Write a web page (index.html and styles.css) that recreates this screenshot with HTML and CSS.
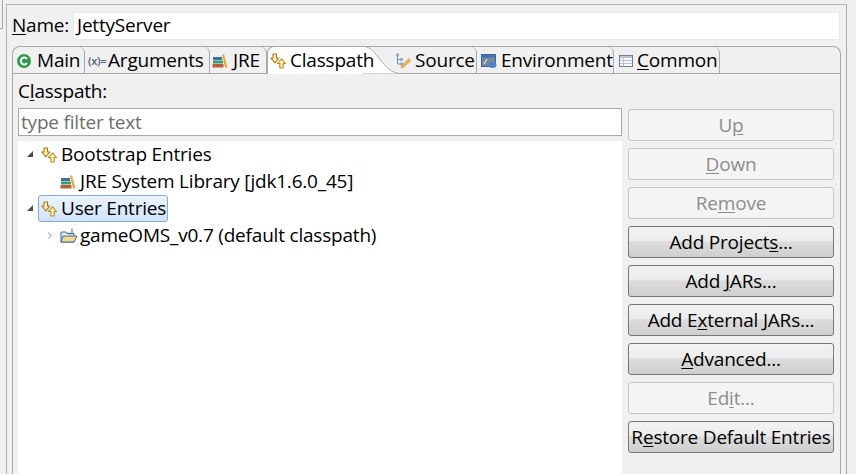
FILE: index.html
```html
<!DOCTYPE html>
<html lang="en">
<head>
<meta charset="utf-8">
<title>JettyServer</title>
<link rel="stylesheet" href="styles.css">
</head>
<body>
<svg class="defs" width="0" height="0" aria-hidden="true">
  <symbol id="i-cp" viewBox="0 0 16 16">
    <path d="M3 1h3.500v4h2.300L4.800 9.800.8 5H3z" fill="#fdf0b8" stroke="#a87a1e" stroke-width="1.100" stroke-linejoin="round"/>
    <path d="M9.800 15V10.500H7.300L11.500 5.800 15.500 10.500h-2.300V15z" fill="#fdf0b8" stroke="#c08c22" stroke-width="1.100" stroke-linejoin="round"/>
  </symbol>
  <symbol id="i-jre" viewBox="0 0 16 16">
    <rect x="1" y="4" width="9" height="3" fill="#3d6f99"/>
    <rect x="1" y="7.500" width="10" height="3" fill="#3e9a78"/>
    <rect x="0.500" y="11" width="11" height="3.500" fill="#b5603a"/>
    <path d="M10 2l2-1 3.500 13.500h-2.500z" fill="#e8a83a"/>
  </symbol>
  <symbol id="i-folder" viewBox="0 0 18 16">
    <path d="M1 4h5l1 1.500h7v8.500H1z" fill="#e8eef6" stroke="#3b6a9c"/>
    <path d="M3 8h14l-3 6H1z" fill="#f3d98b" stroke="#3b6a9c"/>
    <path d="M12 0.500v4a1.500 1.500 0 0 1-3 0" fill="none" stroke="#3b6a9c"/>
  </symbol>
</svg>

<div class="shell">
  <div class="gutter"></div>
  <main class="panel">
    <div class="name-row">
      <label class="name-label txt"><u>N</u>ame:</label>
      <div class="field name-field">JettyServer</div>
    </div>

    <section class="tabfolder">
      <div class="tabs">
        <div class="tab t-main">
          <svg class="ico" viewBox="0 0 16 16"><circle cx="8" cy="8" r="7" fill="#2f9b4a"/><path d="M11 5.800a3.500 3.500 0 1 0 0 4.400" fill="none" stroke="#fff" stroke-width="2"/></svg>
          <span class="txt">Main</span>
        </div>
        <div class="tab t-args"><span class="vars">(x)=</span><span class="txt">Arguments</span></div>
        <div class="tab t-jre"><svg class="ico"><use href="#i-jre"/></svg><span class="txt">JRE</span></div>
        <div class="tab active t-cp">
          <svg class="ico"><use href="#i-cp"/></svg><span class="over txt">Classpath</span>
          <svg class="curve" viewBox="0 0 38 28" preserveAspectRatio="none"><path d="M0 0.500H1C14 1 20 27 37 27.500H0z" fill="#fff"/><path d="M0 0.500H1C14 1 20 27 37 27.500" fill="none" stroke="#a9a9a9"/></svg>
        </div>
        <div class="tab t-src">
          <svg class="ico" viewBox="0 0 16 16"><path d="M2.500 2v9h3M2.500 6.500h3" fill="none" stroke="#6f8fb5"/><rect x="1" y="0.500" width="3" height="3" fill="#8fb0d6"/><rect x="5" y="5" width="3" height="3" fill="#8fb0d6"/><rect x="5" y="9.500" width="3" height="3" fill="#8fb0d6"/><path d="M6 15l1-3 7-6.500 2 2-7 6.500z" fill="#e9b55c" stroke="#c9913c" stroke-width=".6"/></svg>
          <span class="txt">Source</span>
        </div>
        <div class="tab t-env">
          <svg class="ico" viewBox="0 0 16 16"><rect x="0.500" y="1.500" width="14" height="12" fill="#7688a0" stroke="#3f6590"/><rect x="1" y="2" width="13" height="2.500" fill="#3f74b0"/><path d="M3 11l3-5" stroke="#fff"/><ellipse cx="11.500" cy="12" rx="4" ry="3" fill="#4a86c5"/></svg>
          <span class="txt">Environment</span>
        </div>
        <div class="tab t-common">
          <svg class="ico" viewBox="0 0 16 16"><rect x="1.500" y="2.500" width="13" height="11" fill="#f6f8fb" stroke="#6d7f95"/><rect x="2" y="3" width="12" height="2" fill="#b9c7d8"/><path d="M5.500 5v8M2 7.500h12M2 10.500h12" stroke="#b6c2d0"/></svg>
          <span class="txt"><u>C</u>ommon</span>
        </div>
      </div>

      <div class="body">
        <label class="cp-label">C<u>l</u>asspath:</label>
        <div class="columns">
          <div class="left">
            <div class="field filter">type filter text</div>
            <ul class="tree">
              <li class="row">
                <span class="tw open"></span>
                <span class="entry"><svg class="ico"><use href="#i-cp"/></svg><span class="txt">Bootstrap Entries</span></span>
              </li>
              <li class="row depth">
                <svg class="ico"><use href="#i-jre"/></svg><span class="txt">JRE System Library [jdk1.6.0_45]</span>
              </li>
              <li class="row">
                <span class="tw open"></span>
                <span class="entry selected"><svg class="ico"><use href="#i-cp"/></svg><span class="txt">User Entries</span></span>
              </li>
              <li class="row depth">
                <span class="tw closed"></span>
                <svg class="ico wide"><use href="#i-folder"/></svg><span class="txt">gameOMS_v0.7 (default classpath)</span>
              </li>
            </ul>
          </div>
          <div class="buttons">
            <button class="btn" disabled>U<u>p</u></button>
            <button class="btn" disabled><u>D</u>own</button>
            <button class="btn" disabled>Re<u>m</u>ove</button>
            <button class="btn">Add Project<u>s</u>...</button>
            <button class="btn">Add <u>J</u>ARs...</button>
            <button class="btn">Add E<u>x</u>ternal JARs...</button>
            <button class="btn"><u>A</u>dvanced...</button>
            <button class="btn" disabled>Ed<u>i</u>t...</button>
            <button class="btn">R<u>e</u>store Default Entries</button>
          </div>
        </div>
      </div>
    </section>
  </main>
</div>
</body>
</html>
```
FILE: styles.css
```css
* { box-sizing: border-box; }
html, body { margin: 0; height: 474px; overflow: hidden; }
body {
  background: #f0f0f0;
  color: #000;
  font: 19px/24px "Open Sans", "Noto Sans", sans-serif;
  letter-spacing: -0.2px;
}
.defs { position: absolute; }
u { text-underline-offset: 2px; }
.txt { margin-bottom: 2px; }
.shell { display: flex; height: 474px; }
.gutter {
  width: 3px;
  height: 29px;
  border-right: 1px solid #a9a9a9;
  border-bottom: 1px solid #a9a9a9;
}
.panel {
  width: 841px;
  margin: 4px 0 0 3px;
  padding: 6px 5px 0 5px;
  border-left: 1px solid #b5b5b5;
  border-top: 1px solid #b5b5b5;
  border-right: 1px solid #a9a9a9;
}
.name-row { display: flex; align-items: center; height: 29px; margin-right: 1px; }
.name-label { width: 61px; }
.field { background: #fff; line-height: 26px; }
.name-field { flex: 1; height: 28px; padding-left: 3px; line-height: 24px; border: 1px solid #e8e8ee; }
.tabfolder {
  margin-top: 6px;
  border: 1px solid #a9a9a9;
  border-bottom: 0;
  border-radius: 8px 8px 0 0;
  height: 429px;
  width: 829px;
}
.tabs {
  display: flex;
  height: 27px;
  border-bottom: 1px solid #a9a9a9;
}
.tab {
  display: flex;
  align-items: center;
  gap: 5px;
  height: 27px;
  padding-left: 3px;
  border-right: 1px solid #a9a9a9;
  border-top-right-radius: 6px;
  white-space: nowrap;
  position: relative;
}
.ico { width: 16px; height: 16px; flex: none; }
.t-main { width: 72px; }
.t-args { width: 125px; gap: 3px; }
.t-jre { width: 57px; padding-left: 2px; }
.t-cp {
  width: 96px;
  height: 28px;
  margin-top: -1px;
  padding-left: 2px;
  gap: 4px;
  background: #fff;
  border-top: 1px solid #a9a9a9;
  border-left: 1px solid #a9a9a9;
  border-right: 0;
  border-radius: 7px 0 0 0;
  z-index: 1;
}
.t-src { width: 114px; padding-left: 32px; gap: 4px; }
.t-env { width: 137px; padding-left: 4px; gap: 4px; }
.t-common { width: 106px; padding-left: 4px; gap: 3px; }
.over { position: relative; z-index: 1; }
.curve { position: absolute; left: 95px; top: -1px; width: 38px; height: 28px; }
.vars { font-size: 11px; font-weight: 600; color: #4a5f80; width: 17px; letter-spacing: -0.3px; }
.body { padding: 4px 5px 0 5px; }
.cp-label { display: block; height: 30px; line-height: 26px; }
.columns { display: flex; gap: 6px; }
.left { width: 604px; }
.filter {
  height: 28px;
  border: 1px solid #a9a9a9;
  color: #6d6d6d;
  padding-left: 2px;
}
.tree {
  list-style: none;
  margin: 5px 0 0;
  padding: 0;
  background: #fff;
  height: 340px;
}
.row { display: flex; align-items: center; height: 27px; padding-left: 7px; }
.depth { padding-left: 42px; }
.depth > .ico { margin-right: 4px; }
.depth > .wide { width: 18px; margin-right: 2px; }
.tw { width: 11px; height: 11px; flex: none; position: relative; margin-right: 2px; }
.tw.open::before {
  content: "";
  position: absolute;
  left: 2px; top: 2px;
  border-style: solid;
  border-width: 0 0 6px 6px;
  border-color: transparent transparent #4a4a4a transparent;
}
.tw.closed { margin-left: -15px; margin-right: 4px; }
.tw.closed::before {
  content: "";
  position: absolute;
  left: 1px; top: 3px;
  width: 4px; height: 4px;
  border-top: 1px solid #b0b0b0;
  border-right: 1px solid #b0b0b0;
  transform: rotate(45deg);
}
.entry {
  display: flex;
  align-items: center;
  gap: 4px;
  height: 27px;
  padding: 0 1px 0 3px;
}
.selected {
  background: linear-gradient(#ecf4fd, #cfe3f9);
  border: 1px solid #84acdd;
  border-radius: 3px;
  padding: 0 1px 0 2px;
}
.buttons { display: flex; flex-direction: column; gap: 7px; width: 206px; padding-top: 1px; }
.btn {
  height: 32px;
  padding: 0;
  font: inherit;
  letter-spacing: inherit;
  color: #000;
  border: 1px solid #777;
  border-radius: 3px;
  background: linear-gradient(#f3f3f3 0, #ececec 45%, #dcdcdc 50%, #cfcfcf 100%);
}
.btn:disabled {
  color: #8d8d8d;
  border-color: #c4c4c4;
  background: #f4f4f4;
}
```
